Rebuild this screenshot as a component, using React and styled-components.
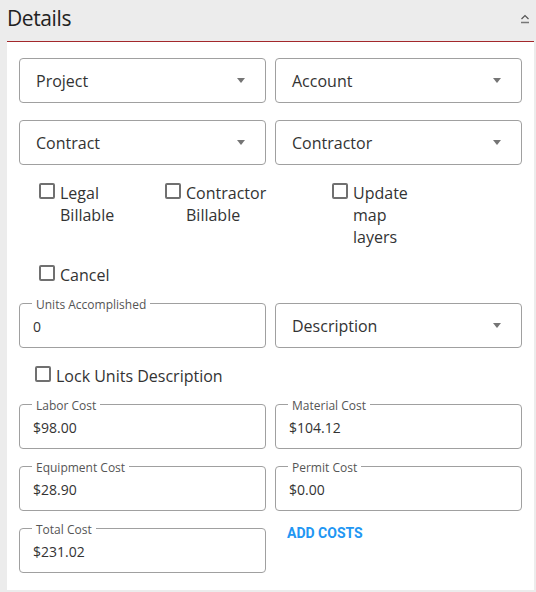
import React from "react";
import styled, { createGlobalStyle } from "styled-components";

const GlobalStyle = createGlobalStyle`
  body {
    margin: 0;
    background: #ececec;
    font-family: "Open Sans", "Liberation Sans", sans-serif;
    color: #333;
  }
`;

const Page = styled.div`
  padding: 0 2px 2px 7px;
`;

const Header = styled.div`
  display: flex;
  justify-content: space-between;
  align-items: flex-start;
  box-sizing: border-box;
  height: 42px;
  padding: 4px 4px 0 0;
  border-bottom: 1px solid #a3282b;
`;

const Title = styled.h2`
  margin: 0;
  font-size: 21px;
  line-height: 28px;
  font-weight: 400;
  letter-spacing: -0.4px;
  color: #222;
`;

const CollapseIcon = styled.svg`
  margin-top: 10px;
`;

const Panel = styled.div`
  display: flex;
  flex-direction: column;
  background: #fff;
  padding: 16px 12px 17px;
`;

const FieldGrid = styled.div`
  display: grid;
  grid-template-columns: 1fr 1fr;
  column-gap: 9px;
  row-gap: 17px;
  margin-top: ${(p) => p.$top || 0}px;
`;

const Select = styled.div`
  display: flex;
  align-items: center;
  justify-content: space-between;
  box-sizing: border-box;
  height: 45px;
  padding: 0 20px 0 16px;
  border: 1px solid #a0a0a0;
  border-radius: 4px;
  font-size: 16px;
  color: #333;
`;

const Arrow = styled.span`
  width: 0;
  height: 0;
  border-left: 4.5px solid transparent;
  border-right: 4.5px solid transparent;
  border-top: 5px solid #757575;
`;

const Field = styled.div`
  position: relative;
  display: flex;
  align-items: center;
  box-sizing: border-box;
  height: 45px;
  padding: 2px 13px 0;
  border: 1px solid #a0a0a0;
  border-radius: 4px;
  font-size: 14px;
  color: #333;
`;

const FloatLabel = styled.span`
  position: absolute;
  top: -7px;
  left: 12px;
  padding: 0 4px;
  background: #fff;
  font-size: 12px;
  line-height: 16px;
  color: #555;
`;

const CheckGroup = styled.div`
  display: flex;
  flex-direction: column;
  row-gap: 16px;
  margin-top: ${(p) => p.$top || 0}px;
  padding-left: ${(p) => p.$left || 0}px;
`;

const CheckRow = styled.div`
  display: flex;
`;

const CheckItem = styled.label`
  display: flex;
  gap: 5px;
  width: ${(p) => (p.$width ? `${p.$width}px` : "auto")};
  font-size: 16px;
  line-height: 22px;
  color: #333;
`;

const Box = styled.span`
  flex-shrink: 0;
  box-sizing: border-box;
  width: 16px;
  height: 16px;
  margin-top: 1px;
  border: 2px solid #707070;
  border-radius: 2px;
`;

const CheckText = styled.span`
  max-width: ${(p) => p.$max}px;
`;

const AddButton = styled.button`
  justify-self: start;
  align-self: start;
  margin-top: -2px;
  padding: 0 12px;
  border: none;
  background: none;
  font-family: Roboto, "Liberation Sans", sans-serif;
  font-size: 14px;
  font-weight: 700;
  line-height: 14px;
  color: #2196f3;
  cursor: pointer;
`;

const Check = ({ label, width, max = 200 }) => (
  <CheckItem $width={width}>
    <Box />
    <CheckText $max={max}>{label}</CheckText>
  </CheckItem>
);

const Dropdown = ({ label }) => (
  <Select>
    {label}
    <Arrow />
  </Select>
);

const Outlined = ({ label, value }) => (
  <Field>
    <FloatLabel>{label}</FloatLabel>
    {value}
  </Field>
);

export default function App() {
  return (
    <Page>
      <GlobalStyle />
      <Header>
        <Title>Details</Title>
        <CollapseIcon width="10" height="10" viewBox="0 0 10 10">
          <polyline points="1.5,5 5,1.5 8.5,5" fill="none" stroke="#555" strokeWidth="1.2" />
          <line x1="1" y1="8.5" x2="9" y2="8.5" stroke="#777" strokeWidth="1.5" />
        </CollapseIcon>
      </Header>
      <Panel>
        <FieldGrid>
          <Dropdown label="Project" />
          <Dropdown label="Account" />
          <Dropdown label="Contract" />
          <Dropdown label="Contractor" />
        </FieldGrid>

        <CheckGroup $top={17} $left={20}>
          <CheckRow>
            <Check label="Legal Billable" width={126} max={70} />
            <Check label="Contractor Billable" width={167} max={100} />
            <Check label="Update map layers" max={65} />
          </CheckRow>
          <CheckRow>
            <Check label="Cancel" />
          </CheckRow>
        </CheckGroup>

        <FieldGrid $top={17}>
          <Outlined label="Units Accomplished" value="0" />
          <Dropdown label="Description" />
        </FieldGrid>

        <CheckGroup $top={17} $left={16}>
          <Check label="Lock Units Description" />
        </CheckGroup>

        <FieldGrid $top={17}>
          <Outlined label="Labor Cost" value="$98.00" />
          <Outlined label="Material Cost" value="$104.12" />
          <Outlined label="Equipment Cost" value="$28.90" />
          <Outlined label="Permit Cost" value="$0.00" />
          <Outlined label="Total Cost" value="$231.02" />
          <AddButton>ADD COSTS</AddButton>
        </FieldGrid>
      </Panel>
    </Page>
  );
}
